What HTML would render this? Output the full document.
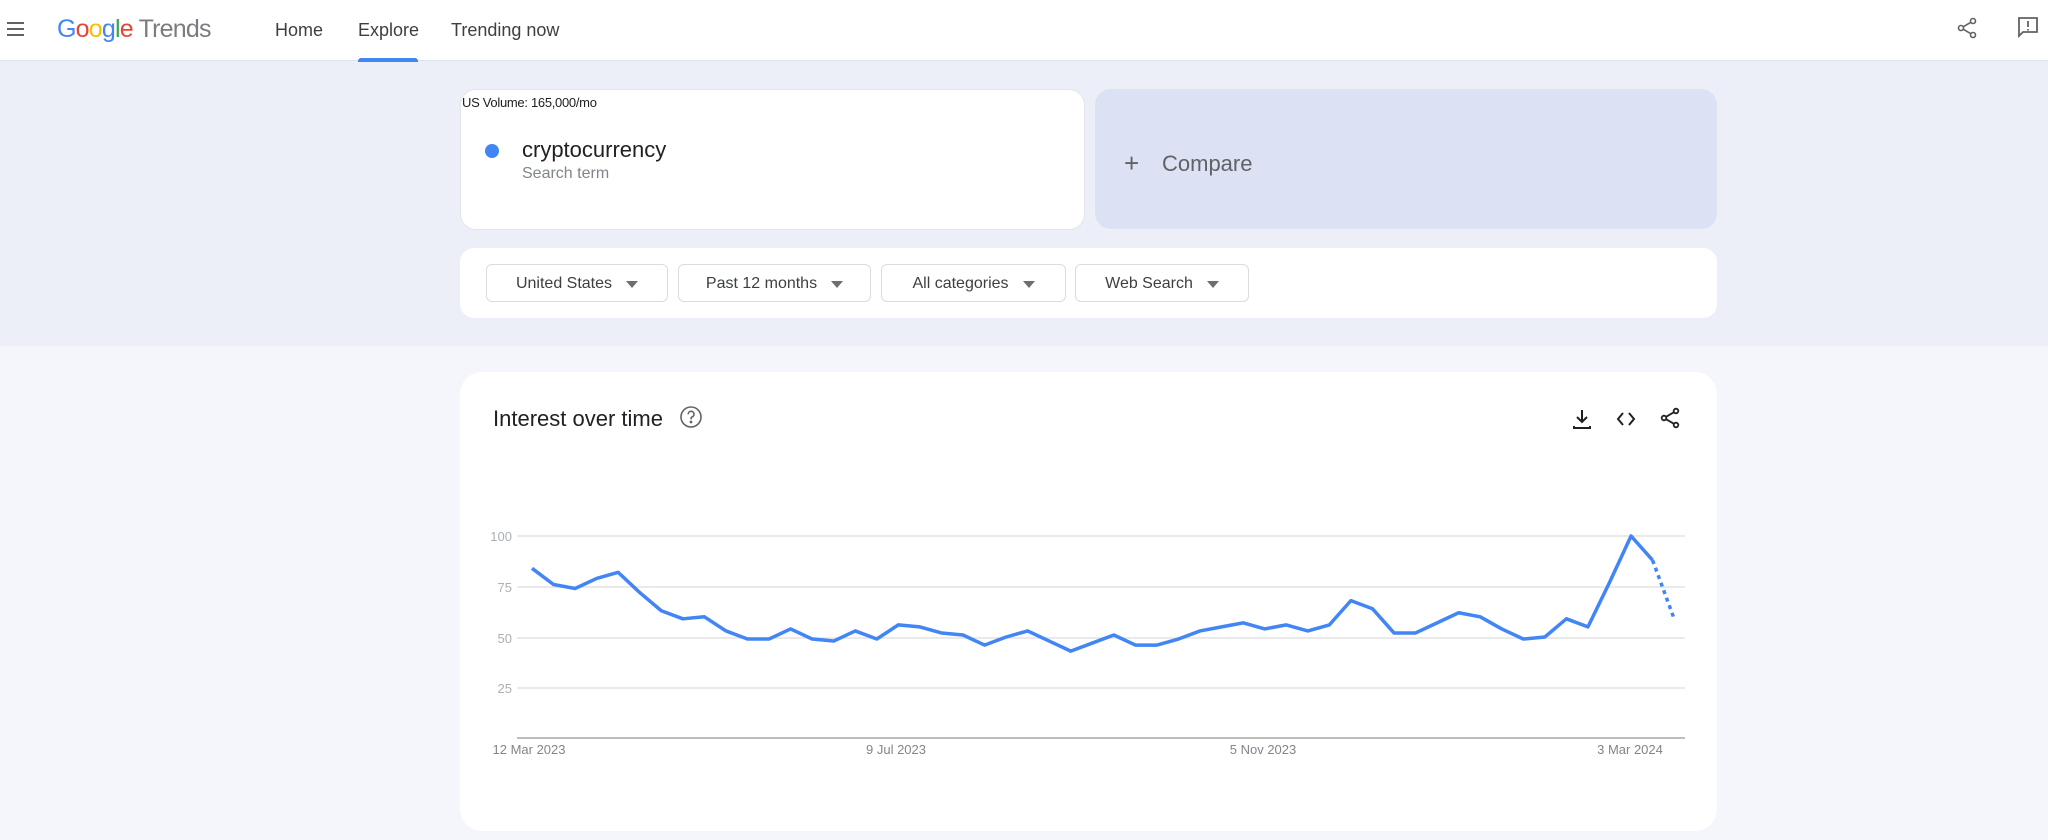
<!DOCTYPE html>
<html><head><meta charset="utf-8"><style>
*{margin:0;padding:0;box-sizing:border-box}
body{width:2048px;height:840px;overflow:hidden;background:#f4f6fb;font-family:"Liberation Sans",sans-serif;position:relative}
.abs{position:absolute}
.hdr{left:0;top:0;width:2048px;height:61px;background:#fff;border-bottom:1px solid #dfe3ea}
.band{left:0;top:61px;width:2048px;height:285px;background:#eceff7}
.nav{font-size:18px;color:#3c4043;top:20px}
.card{background:#fff;border-radius:16px}
.btn{top:264px;height:38px;padding-top:2px;border:1px solid #dadce0;border-radius:6px;background:#fff;font-size:16px;color:#3c4043;display:flex;align-items:center;justify-content:center;gap:14px}
.tri{width:0;height:0;border-left:6px solid transparent;border-right:6px solid transparent;border-top:7px solid #6b6e72}
</style></head><body>
<div class="abs hdr"></div>
<div class="abs band"></div>
<svg class="abs" style="left:6px;top:20px" width="20" height="18" viewBox="0 0 20 18"><path d="M1 3h17M1 9h17M1 15h17" stroke="#5f6368" stroke-width="2"/></svg>
<div class="abs" style="left:57px;top:15px;font-size:25px;letter-spacing:-0.8px"><span style="color:#4285f4">G</span><span style="color:#ea4335">o</span><span style="color:#fbbc05">o</span><span style="color:#4285f4">g</span><span style="color:#34a853">l</span><span style="color:#ea4335">e</span> <span style="color:#7a7d80">Trends</span></div>
<div class="abs nav" style="left:275px">Home</div>
<div class="abs nav" style="left:358px">Explore</div>
<div class="abs nav" style="left:451px">Trending now</div>
<div class="abs" style="left:358px;top:58px;width:60px;height:4px;background:#4285f4;border-radius:3px 3px 0 0"></div>
<svg class="abs" style="left:1955px;top:16px" width="24" height="24" viewBox="0 0 24 24" fill="none" stroke="#5f6368" stroke-width="1.6"><circle cx="18" cy="5" r="2.5"/><circle cx="6" cy="12" r="2.5"/><circle cx="18" cy="19" r="2.5"/><path d="M8.2 10.8l7.6-4.5M8.2 13.2l7.6 4.5"/></svg>
<svg class="abs" style="left:2016px;top:15px" width="24" height="24" viewBox="0 0 24 24" fill="none" stroke="#5f6368" stroke-width="1.8"><path d="M3 3h18v14H7l-4 4z"/><path d="M12 6v6M12 14v1.5"/></svg>

<div class="abs card" style="left:460px;top:89px;width:625px;height:141px;border:1px solid #e3e5ea"></div>
<div class="abs" style="left:462px;top:95px;font-size:13px;color:#202124;letter-spacing:-0.3px">US Volume: 165,000/mo</div>
<div class="abs" style="left:485px;top:144px;width:14px;height:14px;border-radius:50%;background:#4285f4"></div>
<div class="abs" style="left:522px;top:137px;font-size:22px;color:#202124">cryptocurrency</div>
<div class="abs" style="left:522px;top:165px;font-size:16px;color:#80868b">Search term</div>
<div class="abs" style="left:1095px;top:89px;width:622px;height:140px;background:#dce1f3;border-radius:16px"></div>
<div class="abs" style="left:1124px;top:148px;font-size:26px;color:#5f6368">+</div>
<div class="abs" style="left:1162px;top:151px;font-size:22px;color:#5f6368">Compare</div>

<div class="abs card" style="left:460px;top:248px;width:1257px;height:70px;border-radius:14px"></div>
<div class="abs btn" style="left:486px;width:182px">United States<span class="tri"></span></div>
<div class="abs btn" style="left:678px;width:193px">Past 12 months<span class="tri"></span></div>
<div class="abs btn" style="left:881px;width:185px">All categories<span class="tri"></span></div>
<div class="abs btn" style="left:1075px;width:174px">Web Search<span class="tri"></span></div>

<div class="abs card" style="left:460px;top:372px;width:1257px;height:459px;border-radius:22px"></div>
<div class="abs" style="left:493px;top:406px;font-size:22px;color:#202124">Interest over time</div>
<svg class="abs" style="left:679px;top:405px" width="24" height="24" viewBox="0 0 24 24" fill="none" stroke="#5f6368" stroke-width="1.6"><circle cx="12" cy="12" r="10"/><path d="M9.2 9.3a2.9 2.9 0 1 1 4 2.6c-.8.4-1.2 1-1.2 1.9v.6"/><circle cx="12" cy="17" r=".6" fill="#5f6368"/></svg>
<svg class="abs" style="left:1570px;top:407px" width="24" height="24" viewBox="0 0 24 24" fill="none" stroke="#202124" stroke-width="2"><path d="M12 3v12M7 10l5 5 5-5M4 19v2h16v-2"/></svg>
<svg class="abs" style="left:1614px;top:407px" width="24" height="24" viewBox="0 0 24 24" fill="none" stroke="#202124" stroke-width="2"><path d="M9 6l-5 6 5 6M15 6l5 6-5 6"/></svg>
<svg class="abs" style="left:1658px;top:406px" width="24" height="24" viewBox="0 0 24 24" fill="none" stroke="#202124" stroke-width="1.8"><circle cx="18" cy="5" r="2.3"/><circle cx="6" cy="12" r="2.3"/><circle cx="18" cy="19" r="2.3"/><path d="M8 10.8l8-4.6M8 13.2l8 4.6"/></svg>

<svg class="abs" style="left:0;top:0" width="2048" height="840">
<g stroke="#e3e3e3" stroke-width="1.5"><path d="M517 536H1685M517 587H1685M517 638H1685M517 688H1685"/></g>
<path d="M517 738H1685" stroke="#bdbdbd" stroke-width="2"/>
<g font-family="Liberation Sans" font-size="13" fill="#aab0b6" text-anchor="end">
<text x="512" y="541">100</text><text x="512" y="592">75</text><text x="512" y="643">50</text><text x="512" y="693">25</text></g>
<g font-family="Liberation Sans" font-size="13" fill="#80868b" text-anchor="middle">
<text x="529" y="754">12 Mar 2023</text><text x="896" y="754">9 Jul 2023</text><text x="1263" y="754">5 Nov 2023</text><text x="1630" y="754">3 Mar 2024</text></g>
<g transform="translate(532,738) scale(21.55,-2.02)" fill="none" stroke="#4285f4" stroke-linejoin="round">
<polyline vector-effect="non-scaling-stroke" stroke-width="3.5" points="0,84 1,76 2,74 3,79 4,82 5,72 6,63 7,59 8,60 9,53 10,49 11,49 12,54 13,49 14,48 15,53 16,49 17,56 18,55 19,52 20,51 21,46 22,50 23,53 24,48 25,43 26,47 27,51 28,46 29,46 30,49 31,53 32,55 33,57 34,54 35,56 36,53 37,56 38,68 39,64 40,52 41,52 42,57 43,62 44,60 45,54 46,49 47,50 48,59 49,55 50,77 51,100 52,88"/>
<polyline vector-effect="non-scaling-stroke" stroke-width="3.5" stroke-dasharray="4 4" points="52,88 53,59"/>
</g>
</svg>
</body></html>
